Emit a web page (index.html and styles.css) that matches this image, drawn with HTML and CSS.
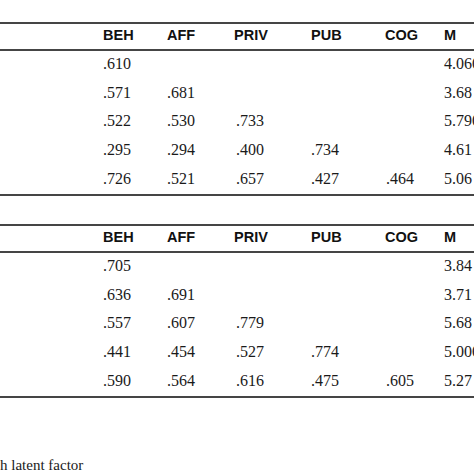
FILE: index.html
```html
<!DOCTYPE html>
<html>
<head>
<meta charset="utf-8">
<link rel="stylesheet" href="styles.css">
</head>
<body>
<div class="page">
  <div class="tbl first">
    <div class="row head">
      <span></span><span>BEH</span><span>AFF</span><span>PRIV</span><span>PUB</span><span>COG</span><span>M</span>
    </div>
    <div class="row"><span></span><span>.610</span><span></span><span></span><span></span><span></span><span>4.060</span></div>
    <div class="row"><span></span><span>.571</span><span>.681</span><span></span><span></span><span></span><span>3.68</span></div>
    <div class="row"><span></span><span>.522</span><span>.530</span><span>.733</span><span></span><span></span><span>5.790</span></div>
    <div class="row"><span></span><span>.295</span><span>.294</span><span>.400</span><span>.734</span><span></span><span>4.61</span></div>
    <div class="row"><span></span><span>.726</span><span>.521</span><span>.657</span><span>.427</span><span>.464</span><span>5.06</span></div>
  </div>
  <div class="tbl second">
    <div class="row head">
      <span></span><span>BEH</span><span>AFF</span><span>PRIV</span><span>PUB</span><span>COG</span><span>M</span>
    </div>
    <div class="row"><span></span><span>.705</span><span></span><span></span><span></span><span></span><span>3.84</span></div>
    <div class="row"><span></span><span>.636</span><span>.691</span><span></span><span></span><span></span><span>3.71</span></div>
    <div class="row"><span></span><span>.557</span><span>.607</span><span>.779</span><span></span><span></span><span>5.68</span></div>
    <div class="row"><span></span><span>.441</span><span>.454</span><span>.527</span><span>.774</span><span></span><span>5.000</span></div>
    <div class="row"><span></span><span>.590</span><span>.564</span><span>.616</span><span>.475</span><span>.605</span><span>5.27</span></div>
  </div>
  <p class="note">h latent factor</p>
</div>
</body>
</html>
```
FILE: styles.css
```css
html, body {
  margin: 0;
  padding: 0;
  background: #ffffff;
}
body {
  width: 474px;
  height: 474px;
  overflow: hidden;
}
.page {
  width: 474px;
  overflow: hidden;
  font-family: "Liberation Serif", "Times New Roman", serif;
  color: #1a1a1a;
}
.tbl {
  border-top: 2px solid #454545;
  border-bottom: 2px solid #454545;
}
.first {
  margin-top: 22px;
}
.second {
  margin-top: 27.5px;
}
.row {
  display: grid;
  grid-template-columns: 103px 64px 67px 77px 74px 59px 60px;
  height: 28.7px;
  box-sizing: border-box;
  padding-bottom: 2.2px;
  line-height: 26.5px;
  font-size: 16px;
  white-space: nowrap;
}
.row span:nth-child(4) {
  padding-left: 2px;
}
.row span:nth-child(6) {
  padding-left: 1px;
}
.head {
  height: 27px;
  padding-bottom: 2px;
  line-height: 23px;
  border-bottom: 2px solid #454545;
  font-family: "Liberation Sans", Arial, sans-serif;
  font-weight: bold;
  font-size: 14.5px;
  color: #111111;
}
.head span:nth-child(4),
.head span:nth-child(6) {
  padding-left: 0;
}
.note {
  margin: 59px 0 0 0;
  font-size: 15px;
  color: #1a1a1a;
  white-space: nowrap;
}
```
